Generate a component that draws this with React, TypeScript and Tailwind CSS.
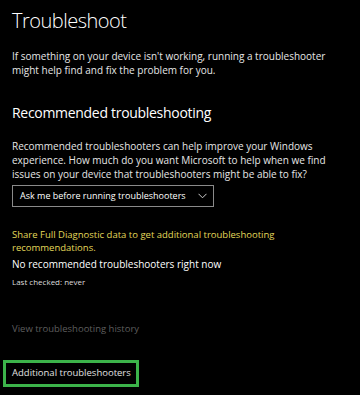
import React from 'react';

const font = { fontFamily: '"Open Sans", "Noto Sans", sans-serif' };

export default function App() {
  return (
    <div className="w-[360px] h-[395px] bg-black text-white overflow-hidden" style={font}>
      <div className="pl-3 pr-3 pt-[8px]">
        <h1 className="text-[20px] font-light leading-[26px] tracking-[-0.5px] text-white">Troubleshoot</h1>
        <p className="mt-[15px] w-[320px] text-[10px] leading-[14px] text-[#e6e6e6]">
          If something on your device isn't working, running a troubleshooter might help find and fix the problem for you.
        </p>

        <h2 className="mt-[26px] text-[14px] leading-[20px] tracking-[-0.3px] text-white">Recommended troubleshooting</h2>
        <p className="mt-[16px] w-[325px] text-[10px] leading-[14px] text-[#e6e6e6]">
          Recommended troubleshooters can help improve your Windows experience. How much do you want Microsoft to help when we find issues on your device that troubleshooters might be able to fix?
        </p>

        <div className="mt-[4px] flex items-center h-[22px] w-[202px] border border-[#8a8a8a] pl-[7px] pr-[6px] text-[9px] text-white whitespace-nowrap">
          <span className="flex-1">Ask me before running troubleshooters</span>
          <svg width="9" height="6" viewBox="0 0 9 6" fill="none" stroke="#cfcfcf" strokeWidth="1">
            <path d="M0.5 0.8 L4.5 4.8 L8.5 0.8" />
          </svg>
        </div>

        <p className="mt-[21px] w-[290px] text-[9.5px] leading-[13px] text-[#e3d95a]">
          Share Full Diagnostic data to get additional troubleshooting recommendations.
        </p>
        <p className="mt-[2px] text-[10px] leading-[16px] text-white whitespace-nowrap">No recommended troubleshooters right now</p>
        <p className="mt-[4px] text-[8px] leading-[12px] text-[#dcdcdc]">Last checked: never</p>

        <p className="mt-[34px] text-[9.5px] leading-[14px] text-[#5e5e5e]">View troubleshooting history</p>
      </div>

      <div className="mt-[24px] ml-[3px] w-[136px] h-[27px] border-[3px] border-[#3cb34a] flex items-center pl-[6px] text-[9.5px] text-[#e0e0e0] whitespace-nowrap">
        Additional troubleshooters
      </div>
    </div>
  );
}
